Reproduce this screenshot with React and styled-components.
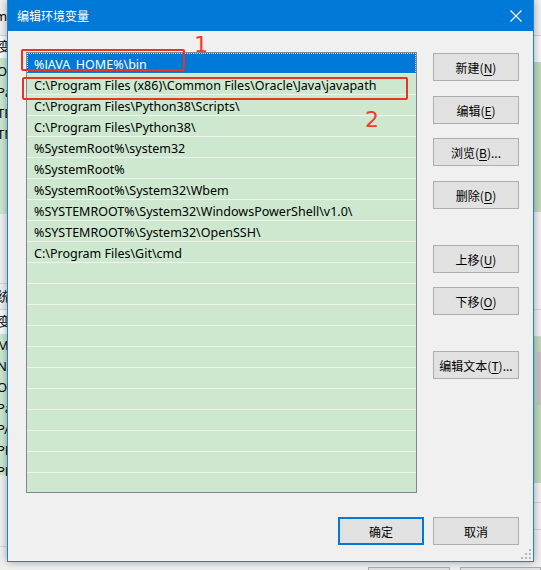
import React from "react";
import styled, { createGlobalStyle } from "styled-components";

const GlobalStyle = createGlobalStyle`
  html, body {
    margin: 0;
    padding: 0;
    background: #f0f0f0;
  }
  body {
    font-family: "Noto Sans", "Noto Sans CJK SC", sans-serif;
    font-size: 12px;
  }
`;

const UI_FONT = `"Noto Sans", "Noto Sans CJK SC", sans-serif`;
const CJK_FONT = `"Noto Sans CJK SC", "Noto Sans", sans-serif`;

const Desktop = styled.div`
  position: relative;
  width: 541px;
  height: 570px;
  overflow: hidden;
  display: grid;
  grid-template-columns: 7px 527px 7px;
  grid-template-rows: 562px 8px;
  background: #f0f0f0;
`;

/* ---------- back window fragments ---------- */

const Strip = styled.div`
  display: flex;
  flex-direction: column;
  overflow: hidden;
  background: #f0f0f0;
`;

const StripSeg = styled.div`
  flex: none;
  height: ${(p) => p.$h}px;
  background: ${(p) => p.$bg || "transparent"};
  border-bottom: ${(p) => (p.$line ? "1px solid #d4d4d4" : "none")};
  display: flex;
  flex-direction: column;
  padding-top: ${(p) => p.$pt || 0}px;
  box-sizing: border-box;
`;

const StripText = styled.div`
  height: 21px;
  line-height: 21px;
  font-family: ${UI_FONT};
  font-size: 13px;
  color: #000;
  white-space: nowrap;
  margin-left: ${(p) => p.$shift || 0}px;
`;

const ScrollThumb = styled.div`
  height: 53px;
  width: 4px;
  margin-left: 3px;
  margin-top: 15px;
  background: #c2c2c2;
`;

const BottomStrip = styled.div`
  grid-column: 1 / span 3;
  background: #f0f0f0;
  display: flex;
  padding-left: 368px;
  gap: 10px;
  padding-top: 5px;
`;

const BackButton = styled.div`
  width: 84px;
  height: 10px;
  border: 1px solid #adadad;
  background: #e1e1e1;
`;

/* ---------- dialog ---------- */

const Dialog = styled.div`
  display: flex;
  flex-direction: column;
  background: #f0f0f0;
  border: 1px solid #1883d7;
  border-top: none;
  box-shadow: 0 0 8px rgba(0, 0, 0, 0.35);
  position: relative;
  z-index: 1;
`;

const TitleBar = styled.div`
  height: 31px;
  background: #0078d7;
  display: flex;
  align-items: center;
  justify-content: space-between;
  padding: 0 11px 0 9px;
  color: #fff;
  font-family: ${CJK_FONT};
  font-size: 12px;
`;

const Body = styled.div`
  flex: 1;
  display: flex;
  flex-direction: column;
  padding: 21px 14px 16px 18px;
`;

const Main = styled.div`
  display: flex;
  gap: 16px;
`;

const PathList = styled.div`
  width: 389px;
  height: 439px;
  border: 1px solid #828790;
  background: #cde8cf;
  overflow: hidden;
  display: flex;
  flex-direction: column;
`;

const Row = styled.div`
  flex: none;
  height: 20px;
  border-bottom: 1px solid #eef3ee;
  padding: 2px 0 0 7px;
  box-sizing: border-box;
  height: 21px;
  display: flex;
  align-items: center;
  font-family: ${UI_FONT};
  font-size: 12.5px;
  color: ${(p) => (p.$selected ? "#fff" : "#000")};
  background: ${(p) => (p.$selected ? "#0078d7" : "transparent")};
  outline: ${(p) => (p.$selected ? "1px dotted #cfe4f7" : "none")};
  outline-offset: -1px;
  white-space: nowrap;
`;

const ButtonColumn = styled.div`
  display: flex;
  flex-direction: column;
`;

const Button = styled.div`
  width: 84px;
  height: 26px;
  margin-top: ${(p) => p.$space || 0}px;
  border: ${(p) => (p.$default ? "2px solid #0078d7" : "1px solid #adadad")};
  background: #e1e1e1;
  display: flex;
  align-items: center;
  justify-content: center;
  font-family: ${CJK_FONT};
  font-size: 12px;
  color: #000;
  box-sizing: content-box;
  ${(p) => p.$default && "width: 82px; height: 24px;"}

  u {
    text-decoration: underline;
    text-underline-offset: 2px;
  }
`;

const Footer = styled.div`
  margin-top: 24px;
  display: flex;
  justify-content: flex-end;
  gap: 9px;
`;

const Grip = styled.svg`
  position: absolute;
  right: 2px;
  bottom: 2px;
`;

/* ---------- red annotations ---------- */

const Mark = styled.div`
  position: absolute;
  left: ${(p) => p.$x}px;
  top: ${(p) => p.$y}px;
  width: ${(p) => p.$w}px;
  height: ${(p) => p.$h}px;
  border: 2.5px solid #ea3323;
  border-radius: 2px;
  box-sizing: border-box;
  z-index: 2;
`;

const MarkLabel = styled.div`
  position: absolute;
  left: ${(p) => p.$x}px;
  top: ${(p) => p.$y}px;
  color: #f23a2c;
  font-family: "DejaVu Sans", sans-serif;
  font-size: 22px;
  font-weight: 400;
  line-height: 1;
  z-index: 2;
`;

const paths = [
  "%JAVA_HOME%\\bin",
  "C:\\Program Files (x86)\\Common Files\\Oracle\\Java\\javapath",
  "C:\\Program Files\\Python38\\Scripts\\",
  "C:\\Program Files\\Python38\\",
  "%SystemRoot%\\system32",
  "%SystemRoot%",
  "%SystemRoot%\\System32\\Wbem",
  "%SYSTEMROOT%\\System32\\WindowsPowerShell\\v1.0\\",
  "%SYSTEMROOT%\\System32\\OpenSSH\\",
  "C:\\Program Files\\Git\\cmd",
];

const sideButtons = [
  { label: "新建", key: "N", space: 1 },
  { label: "编辑", key: "E", space: 15 },
  { label: "浏览", key: "B", space: 14, dots: true },
  { label: "删除", key: "D", space: 15 },
  { label: "上移", key: "U", space: 36 },
  { label: "下移", key: "O", space: 14 },
  { label: "编辑文本", key: "T", space: 36, dots: true },
];

const leftTop = ["O", "Pa", "TE", "TM"];
const leftBottom = ["M", "N", "O", "Pa", "PA", "PF", "PF"];

const App = () => {
  const rows = [...paths, ...Array(21 - paths.length).fill("")];

  return (
    <>
      <GlobalStyle />
      <Desktop>
        <Strip>
          <StripSeg $h={36} $line $pt={6}>
            <StripText $shift={-5}>m</StripText>
          </StripSeg>
          <StripSeg $h={22} $bg="#fafafa" $pt={0}>
            <StripText $shift={-2}>变</StripText>
          </StripSeg>
          <StripSeg $h={156} $bg="#cde8cf" $pt={3}>
            {leftTop.map((t, i) => (
              <StripText key={i} $shift={-3}>
                {t}
              </StripText>
            ))}
          </StripSeg>
          <StripSeg $h={70} $line />
          <StripSeg $h={26} $line $pt={2}>
            <StripText $shift={-3}>统</StripText>
          </StripSeg>
          <StripSeg $h={24} $bg="#fafafa" $pt={1}>
            <StripText $shift={-2}>变</StripText>
          </StripSeg>
          <StripSeg $h={141} $bg="#cde8cf" $pt={1}>
            {leftBottom.map((t, i) => (
              <StripText key={i} $shift={-3}>
                {t}
              </StripText>
            ))}
          </StripSeg>
          <StripSeg $h={72} $line />
        </Strip>

        <Dialog>
          <TitleBar>
            <span>编辑环境变量</span>
            <svg width="12" height="12" viewBox="0 0 12 12">
              <path d="M0.5 0.5 L11.5 11.5 M11.5 0.5 L0.5 11.5" stroke="#fff" strokeWidth="1.1" />
            </svg>
          </TitleBar>
          <Body>
            <Main>
              <PathList>
                {rows.map((p, i) => (
                  <Row key={i} $selected={i === 0}>
                    {p}
                  </Row>
                ))}
              </PathList>
              <ButtonColumn>
                {sideButtons.map((b) => (
                  <Button key={b.label} $space={b.space}>
                    {b.label}(<u>{b.key}</u>){b.dots ? "..." : ""}
                  </Button>
                ))}
              </ButtonColumn>
            </Main>
            <Footer>
              <Button $default>确定</Button>
              <Button>取消</Button>
            </Footer>
          </Body>
          <Grip width="10" height="10" viewBox="0 0 10 10">
            {[
              [8, 0],
              [8, 4],
              [4, 4],
              [8, 8],
              [4, 8],
              [0, 8],
            ].map(([x, y], i) => (
              <rect key={i} x={x} y={y} width="2" height="2" fill="#b8b8b8" />
            ))}
          </Grip>
        </Dialog>

        <Strip>
          <StripSeg $h={36} $line />
          <StripSeg $h={26} $bg="#f7f7f7" />
          <StripSeg $h={150} $bg="#bfd8c1" />
          <StripSeg $h={98} $line />
          <StripSeg $h={27} $line />
          <StripSeg $h={146} $bg="#bfd8c1">
            <ScrollThumb />
          </StripSeg>
          <StripSeg $h={20} $line />
          <StripSeg $h={27} $line />
        </Strip>

        <BottomStrip>
          <BackButton />
          <BackButton />
        </BottomStrip>

        <Mark $x={21} $y={49} $w={164} $h={22} />
        <MarkLabel $x={194} $y={34}>1</MarkLabel>
        <Mark $x={22} $y={77} $w={386} $h={23} />
        <MarkLabel $x={365} $y={109}>2</MarkLabel>
      </Desktop>
    </>
  );
};

export default App;
